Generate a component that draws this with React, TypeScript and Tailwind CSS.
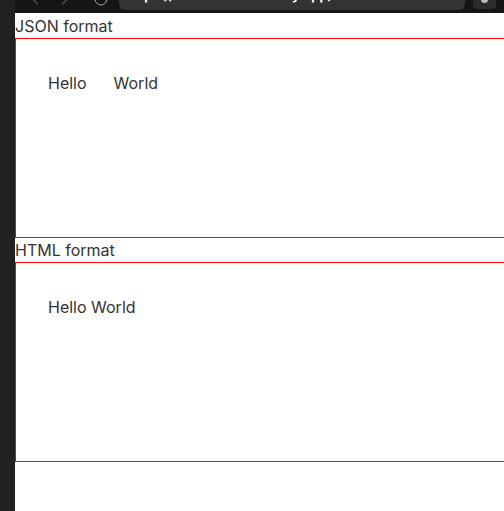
import { RotateCw, ChevronLeft, ChevronRight } from "lucide-react"

function Preview({ label, children }: { label: string; children: React.ReactNode }) {
  return (
    <section>
      <div className="h-6 leading-6 text-[16px] text-[#333]">{label}</div>
      <div className="w-[520px] h-[200px] border border-[#ff0000] px-8 pt-8 text-[16px] leading-6 text-[#333]">
        {children}
      </div>
    </section>
  )
}

export default function App() {
  return (
    <div
      className="flex h-[511px] w-[504px] overflow-hidden bg-white"
      style={{ fontFamily: "Inter, 'Noto Sans', sans-serif" }}
    >
      {/* left edge of the browser window */}
      <div className="w-[15px] shrink-0 bg-[#222222]" />

      <div className="flex min-w-0 flex-1 flex-col">
        {/* browser toolbar, mostly scrolled out of view */}
        <div className="relative h-[13px] shrink-0 overflow-hidden bg-[#151515]">
          <div className="absolute -top-[11px] left-[10px] flex items-center gap-[10px] text-[#555]">
            <ChevronLeft size={20} strokeWidth={1.5} />
            <ChevronRight size={20} strokeWidth={1.5} />
            <RotateCw size={16} strokeWidth={1.5} className="ml-[8px] text-[#aaa]" />
          </div>
          <div className="absolute -top-[14px] left-[104px] flex h-[24px] w-[346px] items-end rounded-[6px] bg-[#333333] px-[8px] pb-[8px]">
            <span className="text-[13px] font-bold leading-none text-white">https://ecstatic-hoa.netlify.app/</span>
          </div>
          <div className="absolute -top-[14px] left-[458px] flex h-[23px] w-[23px] items-end justify-center rounded-[4px] bg-[#2c2c2c] pb-[6px]">
            <div className="h-[7px] w-[7px] rounded-full bg-[#bbb]" />
          </div>
        </div>

        <div className="pt-px">
          <Preview label="JSON format">
            <div className="flex gap-[27px]">
              <span>Hello</span>
              <span>World</span>
            </div>
          </Preview>

          <Preview label="HTML format">
            <p>Hello World</p>
          </Preview>
        </div>
      </div>
    </div>
  )
}
